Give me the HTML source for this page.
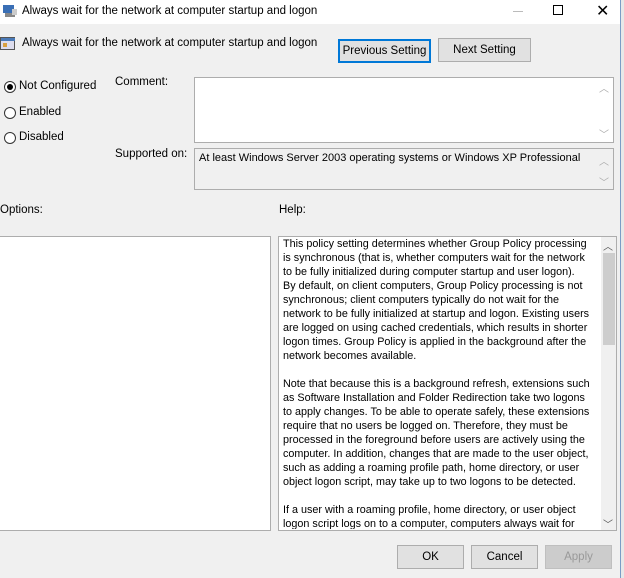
<!DOCTYPE html>
<html><head><style>
*{box-sizing:border-box;margin:0;padding:0}
body{width:624px;height:578px;background:#f0f0f0;font-family:"Liberation Sans",sans-serif;font-size:11.5px;color:#000;position:relative;overflow:hidden}
.a{position:absolute}
.btn{position:absolute;background:#e1e1e1;border:1px solid #adadad;text-align:center;font-size:11.5px}
.rad{position:absolute;width:12px;height:12px;border:1px solid #333;border-radius:50%;background:#fff}
.sb{position:absolute;color:#aaa;font-size:10px}
</style></head><body>
<div class="a" style="left:0;top:0;width:620px;height:24px;background:#fff"></div>
<div class="a" style="left:620px;top:0;width:1px;height:578px;background:#7a9cc6"></div>
<div class="a" style="left:621px;top:0;width:3px;height:578px;background:#e8e8e8"></div>
<svg class="a" style="left:2px;top:3px" width="16" height="16"><rect x="1" y="2" width="11" height="8" fill="#3a6fb5"/><rect x="3" y="10" width="10" height="4" fill="#888"/><rect x="10" y="6" width="5" height="6" fill="#ccc"/></svg>
<div class="a" style="left:22px;top:5px">Always wait for the network at computer startup and logon</div>
<div class="a" style="left:513px;top:11px;width:10px;height:1px;background:#bbb"></div>
<div class="a" style="left:553px;top:5px;width:10px;height:10px;border:1px solid #000"></div>
<div class="a" style="left:596px;top:1px;font-size:16px">✕</div>
<svg class="a" style="left:0;top:36px" width="16" height="16"><rect x="0.5" y="1.5" width="14" height="12" fill="#dde" stroke="#555"/><rect x="1" y="2" width="14" height="3" fill="#4a7ab8"/><rect x="3" y="7" width="4" height="4" fill="#d9a040"/></svg>
<div class="a" style="left:22px;top:37px">Always wait for the network at computer startup and logon</div>
<div class="btn" style="left:338px;top:39px;width:93px;height:24px;border:2px solid #0078d7;line-height:20px">Previous Setting</div>
<div class="btn" style="left:438px;top:38px;width:93px;height:24px;line-height:22px">Next Setting</div>
<div class="rad" style="left:4px;top:81px"><div class="a" style="left:2px;top:2px;width:6px;height:6px;border-radius:50%;background:#000"></div></div>
<div class="a" style="left:19px;top:80px">Not Configured</div>
<div class="rad" style="left:4px;top:107px"></div>
<div class="a" style="left:19px;top:106px">Enabled</div>
<div class="rad" style="left:4px;top:132px"></div>
<div class="a" style="left:19px;top:131px">Disabled</div>
<div class="a" style="left:115px;top:76px">Comment:</div>
<div class="a" style="left:194px;top:77px;width:420px;height:66px;background:#fff;border:1px solid #adadad"></div>
<div class="sb" style="left:599px;top:80px">︿</div><div class="sb" style="left:599px;top:126px">﹀</div>
<div class="a" style="left:115px;top:148px">Supported on:</div>
<div class="a" style="left:194px;top:148px;width:420px;height:42px;background:#f0f0f0;border:1px solid #adadad"></div>
<div class="a" style="left:199px;top:152px;font-size:11px">At least Windows Server 2003 operating systems or Windows XP Professional</div>
<div class="sb" style="left:599px;top:153px">︿</div><div class="sb" style="left:599px;top:174px">﹀</div>
<div class="a" style="left:0;top:204px">Options:</div>
<div class="a" style="left:279px;top:204px">Help:</div>
<div class="a" style="left:-1px;top:236px;width:272px;height:295px;background:#fff;border:1px solid #adadad"></div>
<div class="a" style="left:278px;top:236px;width:339px;height:295px;background:#fff;border:1px solid #adadad"></div>
<div class="a" style="left:283px;top:237px;width:318px;line-height:14px;font-size:10.8px;white-space:nowrap;overflow:hidden;height:292px">
This policy setting determines whether Group Policy processing<br>is synchronous (that is, whether computers wait for the network<br>to be fully initialized during computer startup and user logon).<br>By default, on client computers, Group Policy processing is not<br>synchronous; client computers typically do not wait for the<br>network to be fully initialized at startup and logon. Existing users<br>are logged on using cached credentials, which results in shorter<br>logon times. Group Policy is applied in the background after the<br>network becomes available.<br><br>Note that because this is a background refresh, extensions such<br>as Software Installation and Folder Redirection take two logons<br>to apply changes. To be able to operate safely, these extensions<br>require that no users be logged on. Therefore, they must be<br>processed in the foreground before users are actively using the<br>computer. In addition, changes that are made to the user object,<br>such as adding a roaming profile path, home directory, or user<br>object logon script, may take up to two logons to be detected.<br><br>If a user with a roaming profile, home directory, or user object<br>logon script logs on to a computer, computers always wait for</div>
<div class="a" style="left:601px;top:237px;width:15px;height:293px;background:#f0f0f0"></div>
<div class="a" style="left:603px;top:253px;width:12px;height:92px;background:#cdcdcd"></div>
<div class="sb" style="left:603px;top:238px;color:#555">︿</div><div class="sb" style="left:603px;top:516px;color:#555">﹀</div>
<div class="btn" style="left:397px;top:545px;width:67px;height:24px;line-height:22px">OK</div>
<div class="btn" style="left:471px;top:545px;width:67px;height:24px;line-height:22px">Cancel</div>
<div class="btn" style="left:545px;top:545px;width:67px;height:24px;line-height:22px;background:#ccc;border-color:#bfbfbf;color:#999">Apply</div>
</body></html>
